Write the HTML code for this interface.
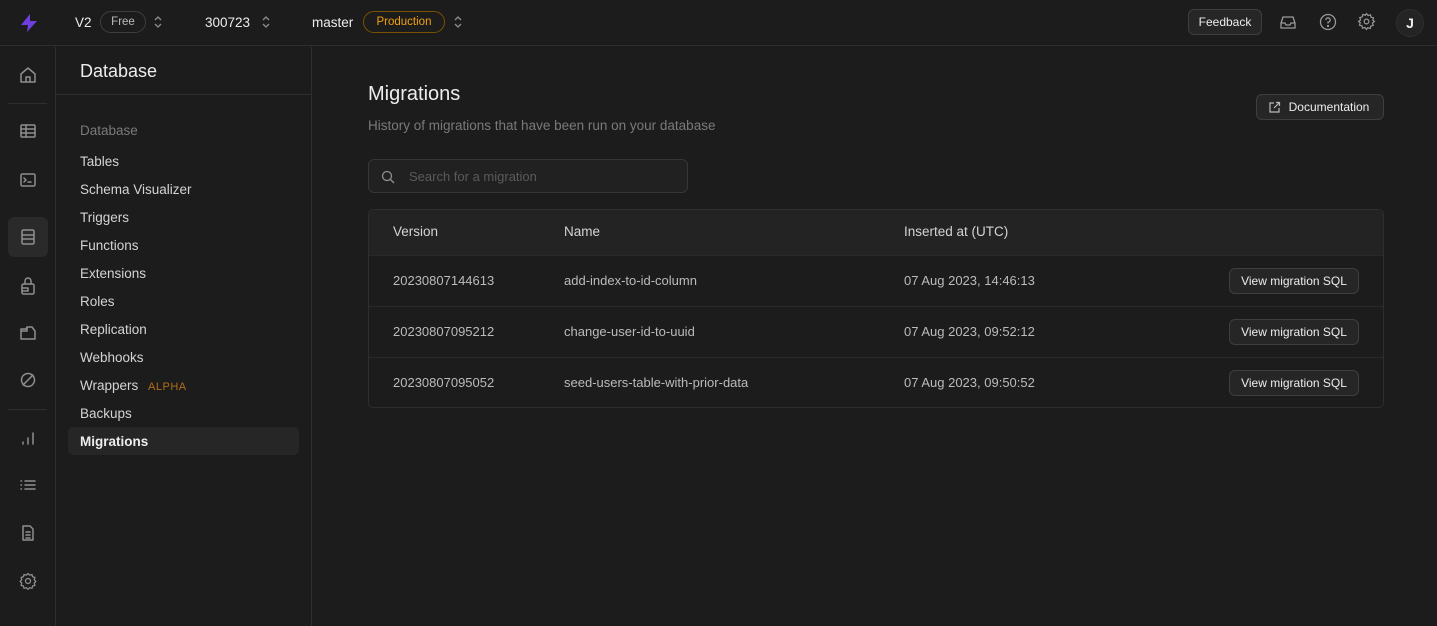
<!DOCTYPE html>
<html><head><meta charset="utf-8">
<style>
*{box-sizing:border-box;margin:0;padding:0}
body{width:1437px;height:626px;background:#1c1c1c;font-family:"Liberation Sans",sans-serif;color:#ededed;position:relative;overflow:hidden;font-size:14px}
.a{position:absolute}
.top{left:0;top:0;width:1437px;height:46px;border-bottom:1px solid #2e2e2e}
.rail{left:0;top:47px;width:56px;height:579px;border-right:1px solid #2e2e2e}
.side{left:56px;top:47px;width:256px;height:579px;border-right:1px solid #2e2e2e}
.ico{position:absolute;left:18px}
.ico svg{width:20px;height:20px;stroke:#8f8f8f;fill:none;stroke-width:1.5;stroke-linecap:round;stroke-linejoin:round}
.nav{position:absolute;left:24px;font-size:13.5px;color:#d4d4d4}
.btn{position:absolute;border:1px solid #3e3e3e;background:#262626;border-radius:6px;font-size:12px;color:#ededed;text-align:center}
.pill{display:inline-block;border:1px solid #3e3e3e;border-radius:12px;font-size:11.5px;height:22px;line-height:20px;padding:0 12px}
.row{position:absolute;left:0;width:1015px;height:51px;border-top:1px solid #2a2a2a;font-size:13px;color:#bbb}
.row span{position:absolute;top:17px}
</style></head><body>
<div class="a top">
 <svg class="a" style="left:18px;top:12px" width="22" height="22" viewBox="0 0 22 22"><path d="M12 2 L3 13 H10 L9 20 L19 9 H12 Z" fill="#6d3fdc"/></svg>
 <div class="a" style="left:75px;top:15px;font-size:13.5px">V2</div>
 <div class="a pill" style="left:100px;top:11px;width:46px;padding:0;text-align:center;color:#bbb">Free</div>
 <div class="a" style="left:205px;top:15px;font-size:13.5px">300723</div>
 <div class="a" style="left:312px;top:15px;font-size:13.5px">master</div>
 <div class="a pill" style="left:363px;top:11px;width:82px;padding:0;text-align:center;color:#f1a10d;border-color:#7a5200">Production</div>
 <svg class="a" style="left:153px;top:15px" width="10" height="14" viewBox="0 0 10 14"><path d="M2 5 L5 2 L8 5 M2 9 L5 12 L8 9" stroke="#8f8f8f" fill="none" stroke-width="1.3"/></svg>
 <svg class="a" style="left:261px;top:15px" width="10" height="14" viewBox="0 0 10 14"><path d="M2 5 L5 2 L8 5 M2 9 L5 12 L8 9" stroke="#8f8f8f" fill="none" stroke-width="1.3"/></svg>
 <svg class="a" style="left:453px;top:15px" width="10" height="14" viewBox="0 0 10 14"><path d="M2 5 L5 2 L8 5 M2 9 L5 12 L8 9" stroke="#8f8f8f" fill="none" stroke-width="1.3"/></svg>
 <div class="btn" style="left:1188px;top:9px;width:74px;height:26px;line-height:24px">Feedback</div>
 <svg class="a" style="left:1279px;top:13px" width="18" height="18" viewBox="0 0 18 18" fill="none" stroke="#9a9a9a" stroke-width="1.3"><path d="M2 10 L4 4 H14 L16 10 V15 H2 Z M2 10 H6 L7 12 H11 L12 10 H16"/></svg>
 <svg class="a" style="left:1319px;top:13px" width="18" height="18" viewBox="0 0 18 18" fill="none" stroke="#9a9a9a" stroke-width="1.3"><circle cx="9" cy="9" r="7.5"/><path d="M6.8 7 A2.2 2.2 0 1 1 9 9.2 V10.5"/><circle cx="9" cy="13" r=".5" fill="#9a9a9a"/></svg>
 <svg class="a" style="left:1357px;top:12px" width="19" height="19" viewBox="0 0 24 24" fill="none" stroke="#9a9a9a" stroke-width="1.5"><circle cx="12" cy="12" r="3"/><path d="M12 2l2 2.5 3-1 .8 3.1 3.1.8-1 3L22 12l-2.5 2 1 3-3.1.8-.8 3.1-3-1L12 22l-2-2.5-3 1-.8-3.1-3.1-.8 1-3L2 12l2.5-2-1-3 3.1-.8.8-3.1 3 1z"/></svg>
 <div class="a" style="left:1396px;top:9px;width:28px;height:28px;border-radius:50%;background:#242424;border:1px solid #2e2e2e;text-align:center;line-height:26px;font-size:14px;font-weight:bold">J</div>
</div>
<div class="a rail">
 <div class="ico" style="top:18px"><svg viewBox="0 0 20 20"><path d="M3 9 L10 3 L17 9 V17 H3 Z M8 17 V12 H12 V17"/></svg></div>
 <div class="a" style="left:8px;top:56px;width:39px;height:1px;background:#2e2e2e"></div>
 <div class="ico" style="top:74px"><svg viewBox="0 0 20 20"><rect x="3" y="4" width="14" height="12" rx="1"/><path d="M3 8 H17 M3 12 H17 M8 4 V16"/></svg></div>
 <div class="ico" style="top:123px"><svg viewBox="0 0 20 20"><rect x="3" y="4" width="14" height="12" rx="1.5"/><path d="M6 8 L8 10 L6 12 M10 12 H13"/></svg></div>
 <div class="a" style="left:8px;top:170px;width:40px;height:40px;border-radius:6px;background:#2a2a2a"></div>
 <div class="ico" style="top:180px"><svg viewBox="0 0 20 20"><rect x="4" y="3" width="12" height="14" rx="1.5"/><path d="M4 8 H16 M4 12 H16"/></svg></div>
 <div class="ico" style="top:229px"><svg viewBox="0 0 20 20"><rect x="4" y="8" width="12" height="10" rx="1.5"/><path d="M7 8 V5 A3 3 0 0 1 13 5 V8 M4 12 H10 V15 H4"/></svg></div>
 <div class="ico" style="top:276px"><svg viewBox="0 0 20 20"><path d="M3 6 V16 H17 V8 L14 4 H9 L8 6 Z M9 4 V8 H3"/></svg></div>
 <div class="ico" style="top:323px"><svg viewBox="0 0 20 20"><circle cx="10" cy="10" r="6.5"/><path d="M5 15 L15 5"/></svg></div>
 <div class="a" style="left:8px;top:362px;width:39px;height:1px;background:#2e2e2e"></div>
 <div class="ico" style="top:381px"><svg viewBox="0 0 20 20"><path d="M5 16 V14 M10 16 V10 M15 16 V5"/></svg></div>
 <div class="ico" style="top:428px"><svg viewBox="0 0 20 20"><path d="M3 6 H3.5 M3 10 H3.5 M3 14 H3.5 M7 6 H17 M7 10 H17 M7 14 H17"/></svg></div>
 <div class="ico" style="top:476px"><svg viewBox="0 0 20 20"><path d="M5 3 H12 L15 6 V17 H5 Z M8 9 H12 M8 12 H12 M8 15 H12"/></svg></div>
 <div class="ico" style="top:524px"><svg viewBox="0 0 24 24"><circle cx="12" cy="12" r="3"/><path d="M12 3l2 2 2.8-.8.7 2.8 2.8.7-.8 2.8 2 2-2 2 .8 2.8-2.8.7-.7 2.8-2.8-.8-2 2-2-2-2.8.8-.7-2.8-2.8-.7.8-2.8-2-2 2-2-.8-2.8 2.8-.7.7-2.8 2.8.8z"/></svg></div>
</div>
<div class="a side">
 <div class="a" style="left:24px;top:14px;font-size:18px;color:#ededed">Database</div>
 <div class="a" style="left:0;top:47px;width:255px;height:1px;background:#2e2e2e"></div>
 <div class="nav" style="top:76px;color:#7a7a7a">Database</div>
 <div class="nav" style="top:107px">Tables</div>
 <div class="nav" style="top:135px">Schema Visualizer</div>
 <div class="nav" style="top:163px">Triggers</div>
 <div class="nav" style="top:191px">Functions</div>
 <div class="nav" style="top:219px">Extensions</div>
 <div class="nav" style="top:247px">Roles</div>
 <div class="nav" style="top:275px">Replication</div>
 <div class="nav" style="top:303px">Webhooks</div>
 <div class="nav" style="top:331px">Wrappers <span style="color:#b26d1a;font-size:11px;margin-left:6px;letter-spacing:.5px">ALPHA</span></div>
 <div class="nav" style="top:359px">Backups</div>
 <div class="a" style="left:12px;top:380px;width:231px;height:28px;border-radius:5px;background:#262626"></div>
 <div class="nav" style="top:387px;color:#ededed;font-weight:bold">Migrations</div>
</div>
<div class="a" style="left:368px;top:83px;font-size:20px;color:#ededed">Migrations</div>
<div class="a" style="left:368px;top:118px;font-size:13.5px;color:#7a7a7a">History of migrations that have been run on your database</div>
<div class="btn" style="left:1256px;top:94px;width:128px;height:26px;line-height:24px;padding-left:18px">Documentation
 <svg class="a" style="left:11px;top:6px" width="13" height="13" viewBox="0 0 13 13" fill="none" stroke="#bbb" stroke-width="1.2"><path d="M6 2 H2 V11 H11 V7 M8 1.5 H11.5 V5 M11.5 1.5 L6 7"/></svg></div>
<div class="a" style="left:368px;top:159px;width:320px;height:34px;border:1px solid #363636;border-radius:6px;background:#212121">
 <svg class="a" style="left:12px;top:10px" width="14" height="14" viewBox="0 0 14 14" fill="none" stroke="#8f8f8f" stroke-width="1.3"><circle cx="6" cy="6" r="4.5"/><path d="M9.5 9.5 L13 13"/></svg>
 <div class="a" style="left:40px;top:9px;font-size:13px;color:#5a5a5a">Search for a migration</div>
</div>
<div class="a" style="left:368px;top:209px;width:1016px;height:199px;border:1px solid #2e2e2e;border-radius:5px;overflow:hidden">
 <div class="a" style="left:0;top:0;width:1016px;height:45px;background:#232323;font-size:13.5px;color:#d4d4d4">
  <span class="a" style="left:24px;top:14px">Version</span><span class="a" style="left:195px;top:14px">Name</span><span class="a" style="left:535px;top:14px">Inserted at (UTC)</span></div>
 <div class="row" style="top:45px"><span style="left:24px">20230807144613</span><span style="left:195px">add-index-to-id-column</span><span style="left:535px">07 Aug 2023, 14:46:13</span><div class="btn" style="left:860px;top:12px;width:130px;height:26px;line-height:24px">View migration SQL</div></div>
 <div class="row" style="top:96px"><span style="left:24px">20230807095212</span><span style="left:195px">change-user-id-to-uuid</span><span style="left:535px">07 Aug 2023, 09:52:12</span><div class="btn" style="left:860px;top:12px;width:130px;height:26px;line-height:24px">View migration SQL</div></div>
 <div class="row" style="top:147px"><span style="left:24px">20230807095052</span><span style="left:195px">seed-users-table-with-prior-data</span><span style="left:535px">07 Aug 2023, 09:50:52</span><div class="btn" style="left:860px;top:12px;width:130px;height:26px;line-height:24px">View migration SQL</div></div>
</div>
</body></html>
